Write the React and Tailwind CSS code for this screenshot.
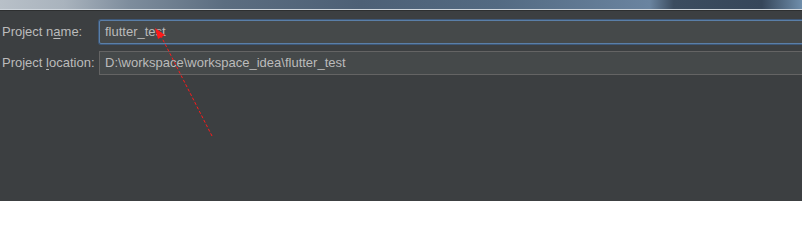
export default function App() {
  return (
    <div className="relative w-[802px] h-[201px] overflow-hidden bg-[#3c3f41] font-['Liberation_Sans',Arial,sans-serif] text-[13px] text-[#bbbbbb]">
      {/* blurred desktop strip behind the dialog */}
      <div className="h-[9px] bg-[linear-gradient(90deg,#b8c0c8_0%,#a9b3bd_8%,#7e8d9d_16%,#5b6d80_28%,#4d6076_45%,#536a82_62%,#6a84a0_81%,#3b4c5f_84%,#36465a_95%,#6f8eab_100%)]" />
      <div className="h-px bg-[#cfd6dd]" />
      <div className="h-px bg-[#2d2f30]" />

      <div className="pt-[9px] flex flex-col gap-[7px]">
        <Row
          label={
            <>
              Project n<u className="underline-offset-2">a</u>me:
            </>
          }
          value="flutter_test"
          focused
        />
        <Row
          label={
            <>
              Project <u className="underline-offset-2">l</u>ocation:
            </>
          }
          value="D:\workspace\workspace_idea\flutter_test"
        />
      </div>

      <svg className="absolute left-0 top-0" width="802" height="201">
        <line
          x1="212"
          y1="136"
          x2="161"
          y2="36"
          stroke="#ff1a1a"
          strokeWidth="1"
          strokeDasharray="3 2"
        />
        <polygon points="155,28 165,35 158,39" fill="#ff1a1a" />
      </svg>
    </div>
  );
}

function Row({ label, value, focused }) {
  return (
    <div className="flex items-center h-[24px]">
      <div className="w-[99px] pl-[2px] shrink-0 whitespace-nowrap">{label}</div>
      <div
        className={
          focused
            ? "flex-1 -mr-2 h-[24px] flex items-center pl-[5px] bg-[#45494a] border border-[#5a7fa8] ring-1 ring-[#3e5878] rounded-[2px]"
            : "flex-1 -mr-2 h-[24px] flex items-center pl-[5px] bg-[#45494a] border border-[#646464]"
        }
      >
        <span className="whitespace-nowrap">{value}</span>
      </div>
    </div>
  );
}
